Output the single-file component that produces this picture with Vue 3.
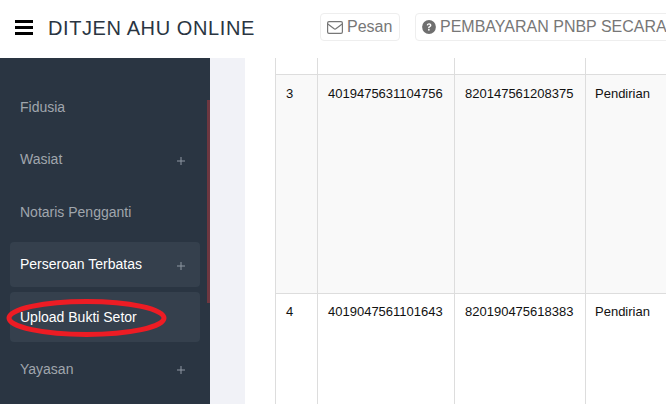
<script setup>
const menu = [
  { label: 'Fidusia' },
  { label: 'Wasiat', plus: true },
  { label: 'Notaris Pengganti' },
  { label: 'Perseroan Terbatas', plus: true, active: true },
  { label: 'Upload Bukti Setor', sub: true },
  { label: 'Yayasan', plus: true }
]
const rows = [
  { no: '', a: '', b: '', c: '', cls: 'r-top' },
  { no: '3', a: '4019475631104756', b: '820147561208375', c: 'Pendirian', cls: 'r-odd' },
  { no: '4', a: '4019047561101643', b: '820190475618383', c: 'Pendirian', cls: 'r-even' }
]
</script>

<template>
  <div class="page">
    <header class="top">
      <svg class="burger" width="18" height="15" viewBox="0 0 18 15"><path d="M0 0h18v3H0zM0 6h18v3H0zM0 12h18v3H0z" fill="#000"/></svg>
      <div class="brand">DITJEN AHU ONLINE</div>
      <div class="pill pesan">
        <svg width="16" height="13" viewBox="0 0 16 13" fill="none" stroke="#777" stroke-width="1.2"><rect x=".6" y=".6" width="14.8" height="11.8" rx="1.4"/><path d="M.8 3l6 4.6c.7.5 1.7.5 2.4 0l6-4.6"/></svg>
        <span>Pesan</span>
      </div>
      <div class="pill pnbp">
        <svg width="14" height="14" viewBox="0 0 14 14"><circle cx="7" cy="7" r="6.9" fill="#6f6f6f"/><path d="M4.7 5.3C4.9 4 5.9 3.3 7.1 3.3c1.300 0 2.300.8 2.300 2 0 1-.6 1.400-1.200 1.800-.5.300-.7.500-.7 1.100H6.100c0-1 .3-1.500 1-1.900.5-.3.8-.5.800-.9 0-.5-.4-.8-.9-.8-.6 0-.9.300-1 .9z" fill="#fff"/><rect x="6.100" y="9" width="1.500" height="1.600" fill="#fff"/></svg>
        <span>PEMBAYARAN PNBP SECARA</span>
      </div>
    </header>
    <div class="body">
      <aside class="side">
        <div class="bar"></div>
        <div v-for="m in menu" :key="m.label" class="item" :class="{ active: m.active, sub: m.sub }">
          <span>{{ m.label }}</span>
          <svg v-if="m.plus" class="plus" width="8" height="8" viewBox="0 0 8 8"><path d="M4 0v8M0 4h8" stroke="#8f98a3" stroke-width="1"/></svg>
        </div>
        <svg class="ring" width="166" height="46" viewBox="0 0 166 46"><ellipse cx="82.500" cy="23" rx="77.500" ry="16.500" fill="none" stroke="#ed1c24" stroke-width="5"/></svg>
      </aside>
      <main class="main">
        <section class="panel">
          <table class="tbl">
            <colgroup><col class="c1"><col class="c2"><col class="c3"><col class="c4"><col class="c5"></colgroup>
            <tbody>
              <tr v-for="(r, i) in rows" :key="i" :class="r.cls">
                <td>{{ r.no }}</td><td>{{ r.a }}</td><td>{{ r.b }}</td><td>{{ r.c }}</td><td></td>
              </tr>
            </tbody>
          </table>
        </section>
      </main>
    </div>
  </div>
</template>

<style>
html, body { margin: 0; overflow: hidden; }
</style>

<style scoped>
.page {
  width: 666px;
  height: 404px;
  overflow: hidden;
  font-family: "Liberation Sans", Arial, sans-serif;
  display: flex;
  flex-direction: column;
  background: #f1f2f7;
}
.top {
  height: 58px;
  flex: none;
  box-sizing: border-box;
  background: #fff;
  display: flex;
  align-items: center;
  padding: 0 0 4px 15px;
  white-space: nowrap;
  overflow: hidden;
}
.burger { flex: none; }
.brand {
  margin: 2px 0 0 15px;
  font-size: 20px;
  letter-spacing: 0.6px;
  color: #2a3542;
  width: 272px;
  flex: none;
}
.pill {
  height: 28px;
  box-sizing: border-box;
  border: 1px solid #eee;
  border-radius: 4px;
  display: flex;
  align-items: center;
  gap: 4px;
  font-size: 16px;
  color: #777;
  padding: 0 6px;
  flex: none;
}
.pesan { width: 80px; }
.pnbp { margin-left: 15px; }
.body { flex: 1; display: flex; min-height: 0; }
.side {
  width: 210px;
  flex: none;
  background: #2a3542;
  position: relative;
  box-sizing: border-box;
  padding: 26.500px 10px 0;
  display: flex;
  flex-direction: column;
  gap: 7.500px;
}
.bar {
  position: absolute;
  right: 0;
  top: 42px;
  width: 3px;
  height: 203px;
  background: #6e3740;
}
.item {
  height: 45px;
  flex: none;
  box-sizing: border-box;
  padding: 0 15px 1px 10px;
  border-radius: 4px;
  display: flex;
  align-items: center;
  justify-content: space-between;
  font-size: 14px;
  color: #a0a6ad;
}
.active { background: #35404d; color: #fff; }
.sub { background: #35404d; color: #fff; height: 50px; margin-top: -2.500px; margin-bottom: -3px; }
.plus { flex: none; margin-top: 3px; }
.ring { position: absolute; left: 4px; top: 237px; }
.main { flex: 1; padding-left: 35px; min-width: 0; }
.panel { height: 100%; background: #fff; padding-left: 30px; overflow: hidden; }
.tbl {
  width: 500px;
  table-layout: fixed;
  border-collapse: collapse;
  font-size: 13px;
  color: #111;
}
.c1 { width: 42px; }
.c2 { width: 137px; }
.c3 { width: 131px; }
.c4 { width: 100px; }
.c5 { width: 90px; }
td {
  border: 1px solid #ddd;
  padding: 9px 10px 8px;
  vertical-align: top;
  line-height: 18px;
  box-sizing: border-box;
  white-space: nowrap;
}
.r-top td { height: 16px; padding: 0; border-top: 0; }
.r-odd td { height: 219px; background: #f9f9f9; padding-top: 10px; }
.r-even td { height: 200px; }
td:nth-child(4) { padding-left: 9px; }
</style>
